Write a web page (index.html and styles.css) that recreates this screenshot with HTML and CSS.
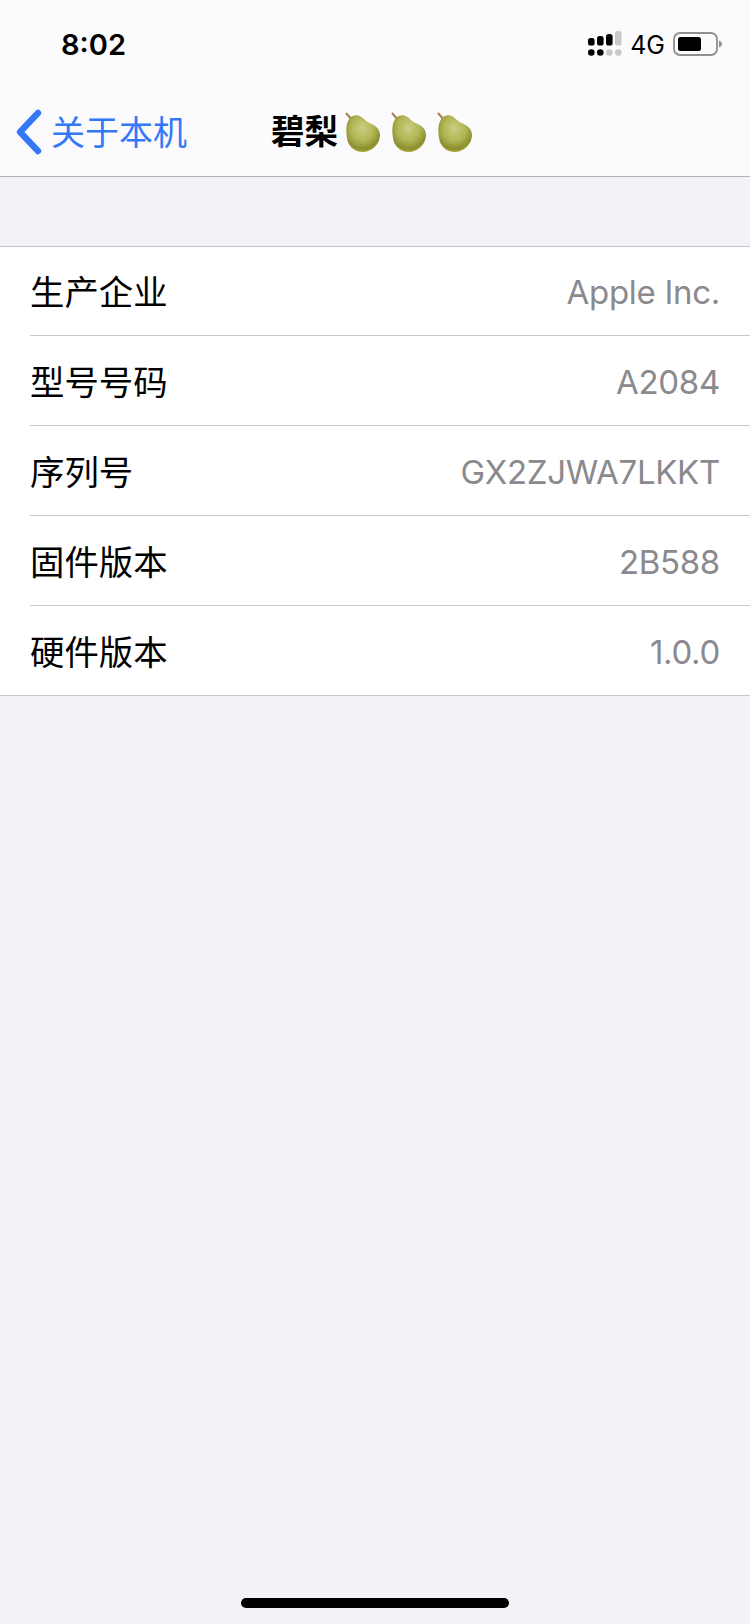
FILE: index.html

```html
<!DOCTYPE html>
<html lang="zh-CN">
<head>
<meta charset="UTF-8">
<meta name="viewport" content="width=device-width, initial-scale=1.0">
<title>碧梨</title>
<link rel="stylesheet" href="styles.css">
</head>
<body>

<svg class="defs" width="0" height="0">
<defs>
<radialGradient id="pearFill" cx="0.48" cy="0.36" r="0.68">
<stop offset="0" stop-color="#c9cf86"/>
<stop offset="0.5" stop-color="#b0b553"/>
<stop offset="0.82" stop-color="#8c8e30"/>
<stop offset="1" stop-color="#b4bc42"/>
</radialGradient>
<symbol id="pear" viewBox="0 0 36 42">
<path d="M1 1 L7 8" stroke="#ab7a4e" stroke-width="2" fill="none"/>
<path d="M8 4 C12 2 16 4 20 8 C24 12 35 13 35 23 C35 33 26 40 18 40 C9 40 3 34 2 26 C1 20 1 16 2 12 C3 8 5 5 8 4 Z" fill="url(#pearFill)"/>
</symbol>
</defs>
</svg>

<header class="top-bar">
<div class="status-bar">
<span class="time">8:02</span>
<div class="status-icons">
<svg class="signal" width="34" height="26" viewBox="0 0 34 26">
<rect x="0" y="7" width="6.6" height="7.5" rx="2.6" fill="#000"/>
<rect x="9" y="5" width="6.6" height="9.5" rx="2.6" fill="#000"/>
<rect x="18" y="3" width="6.6" height="11.5" rx="2.6" fill="#000"/>
<rect x="27" y="0" width="6.6" height="14.5" rx="2.6" fill="#c9c9c9"/>
<circle cx="3.3" cy="21.5" r="3.3" fill="#000"/>
<circle cx="12.3" cy="21.5" r="3.3" fill="#000"/>
<circle cx="21.3" cy="21.5" r="3.3" fill="#c9c9c9"/>
<circle cx="30.3" cy="21.5" r="3.3" fill="#c9c9c9"/>
</svg>
<span class="network">4G</span>
<svg class="battery" width="49" height="24" viewBox="0 0 49 24">
<rect x="1" y="1" width="43" height="22" rx="6" fill="none" stroke="#8e8e8e" stroke-width="1.8"/>
<rect x="5" y="5" width="23" height="14" rx="2.5" fill="#000"/>
<path d="M46 8.5 C48 9.5 49 10.5 49 12 C49 13.5 48 14.5 46 15.5 Z" fill="#8e8e8e"/>
</svg>
</div>
</div>
<nav class="nav-bar">
<a class="back" href="#">
<svg class="chevron" width="26" height="46" viewBox="0 0 26 46">
<path d="M22 4 L4 23 L22 42" fill="none" stroke="#3478f6" stroke-width="6.4" stroke-linecap="round" stroke-linejoin="round"/>
</svg>
<span>关于本机</span>
</a>
<h1 class="title">
<span>碧梨</span>
<svg class="pear" width="36" height="42"><use href="#pear"/></svg>
<svg class="pear" width="36" height="42"><use href="#pear"/></svg>
<svg class="pear" width="36" height="42"><use href="#pear"/></svg>
</h1>
</nav>
</header>

<section class="info-list">
<div class="row"><span class="label">生产企业</span><span class="value">Apple Inc.</span></div>
<div class="row"><span class="label">型号号码</span><span class="value">A2084</span></div>
<div class="row"><span class="label">序列号</span><span class="value">GX2ZJWA7LKKT</span></div>
<div class="row"><span class="label">固件版本</span><span class="value">2B588</span></div>
<div class="row"><span class="label">硬件版本</span><span class="value">1.0.0</span></div>
</section>

<div class="home-indicator"></div>

</body>
</html>
```

FILE: styles.css

```css
body {
font-family: Inter, "Noto Sans CJK SC", sans-serif;
background-color: #f2f2f7;
color: #000;
margin: 0;
height: 1624px;
display: flex;
flex-direction: column;
overflow: hidden;
}
.defs {
position: absolute;
}
.top-bar {
background: #fbfbfd;
border-bottom: 1px solid #b2b2b2;
height: 177px;
box-sizing: border-box;
}
.status-bar {
height: 88px;
display: flex;
align-items: center;
justify-content: space-between;
padding: 0 28px 0 61px;
}
.time {
font-size: 29px;
font-weight: 600;
}
.status-icons {
display: flex;
align-items: center;
}
.network {
font-size: 25px;
margin: 2px 8px 0 8px;
}
.nav-bar {
height: 88px;
display: grid;
grid-template-columns: 1fr auto 1fr;
align-items: center;
}
.back {
display: flex;
align-items: center;
color: #3478f6;
text-decoration: none;
font-size: 34px;
padding-left: 16px;
}
.back span {
margin: 0 0 4px 9px;
}
.title {
grid-column: 2;
margin: 0;
font-size: 33.6px;
font-weight: 700;
display: flex;
align-items: center;
gap: 10px;
margin-left: -7px;
padding-top: 2px;
}
.title span {
margin: 0 -3px 8px 1px;
}
.info-list {
margin-top: 69px;
background: #fff;
border-top: 1px solid #c8c8cc;
border-bottom: 1px solid #c8c8cc;
padding-left: 30px;
}
.row {
height: 89px;
display: flex;
align-items: center;
justify-content: space-between;
padding-right: 30px;
border-bottom: 1px solid #c8c8cc;
}
.row:first-child {
height: 88px;
}
.row:last-child {
border-bottom: none;
}
.label {
font-size: 34.4px;
padding-bottom: 2px;
}
.value {
font-size: 33px;
letter-spacing: -0.3px;
padding-top: 2px;
color: #8a8a8e;
}
.home-indicator {
width: 268px;
height: 10px;
border-radius: 5px;
background: #000;
margin: auto auto 16px;
}
```
